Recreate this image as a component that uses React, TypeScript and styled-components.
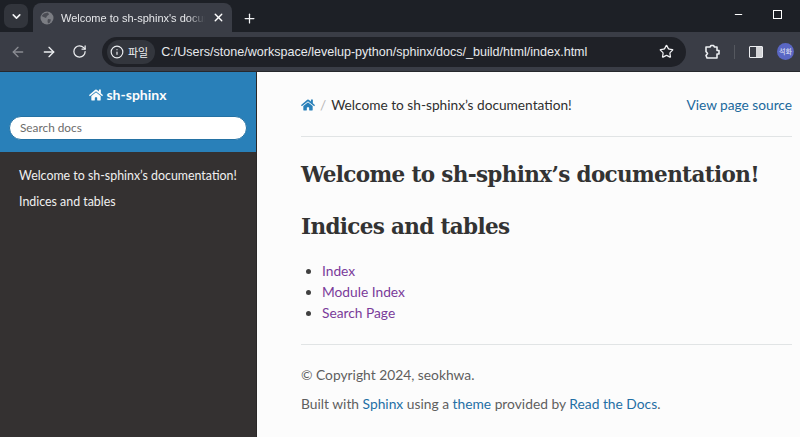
import React from 'react'
import styled, { createGlobalStyle } from 'styled-components'
import { FaHome } from 'react-icons/fa'
import { ArrowLeft, ArrowRight, ChevronDown, Info, Minus, Plus, RotateCw, Star, X } from 'lucide-react'

const GlobalStyle = createGlobalStyle`
  html, body {
    margin: 0;
    padding: 0;
    height: 437px;
    overflow: hidden;
    background: #fcfcfc;
    font-family: Lato, "Liberation Sans", sans-serif;
    font-variant-ligatures: common-ligatures;
  }
`

const Page = styled.div`
  width: 800px;
  height: 437px;
  display: flex;
  flex-direction: column;
  overflow: hidden;
`

const TabStrip = styled.div`
  height: 32px;
  background: #1d2026;
  display: flex;
  align-items: flex-end;
  padding-left: 4px;
  color: #f1f2f4;
`

const TabMenu = styled.div`
  width: 24px;
  height: 24px;
  margin-bottom: 4px;
  border-radius: 7px;
  background: #32353c;
  display: flex;
  align-items: center;
  justify-content: center;
`

const Tab = styled.div`
  width: 199px;
  height: 29px;
  margin-left: 5px;
  padding: 0 7px 0 7px;
  box-sizing: border-box;
  background: #3a3d46;
  border-radius: 8px 8px 0 0;
  display: flex;
  align-items: center;
  gap: 7px;
  font-family: "Liberation Sans", sans-serif;
  font-size: 11px;
  color: #e6e7ea;
`

const TabTitle = styled.span`
  flex: 1;
  overflow: hidden;
  white-space: nowrap;
  mask-image: linear-gradient(to right, #000 88%, transparent);
`

const NewTab = styled.div`
  margin: 0 0 6px 10px;
  display: flex;
  flex: 1;
`

const WindowButtons = styled.div`
  display: flex;
  align-items: center;
  gap: 29px;
  padding: 0 18px 12px 0;
`

const MaxIcon = styled.div`
  width: 7px;
  height: 7px;
  border: 1.5px solid #fff;
`

const Toolbar = styled.div`
  height: 40px;
  background: #3a3d46;
  display: flex;
  align-items: center;
  padding: 0 6px 0 10px;
  box-sizing: border-box;
  border-bottom: 1px solid #26282d;
  color: #eceef1;
`

const NavButton = styled.div<{ $dim?: boolean }>`
  width: 31px;
  display: flex;
  color: ${({ $dim }) => ($dim ? '#8a8c92' : '#eceef1')};
`

const Omnibox = styled.div`
  width: 584px;
  height: 30px;
  margin-left: -1px;
  background: #1f2127;
  border-radius: 15px;
  display: flex;
  align-items: center;
  padding: 0 12px 0 5px;
  box-sizing: border-box;
`

const Chip = styled.div`
  height: 24px;
  padding: 0 7px 0 3px;
  border-radius: 12px;
  background: #33363d;
  display: flex;
  align-items: center;
  gap: 4px;
  font-family: "Noto Sans CJK KR", sans-serif;
  font-size: 11px;
  color: #eceef1;
`

const Url = styled.span`
  flex: 1;
  margin-left: 6px;
  font-family: "Liberation Sans", sans-serif;
  font-size: 12.55px;
  color: #e8eaed;
  white-space: nowrap;
`

const ToolbarRight = styled.div`
  flex: 1;
  display: flex;
  align-items: center;
  justify-content: flex-end;
  gap: 14px;
`

const Divider = styled.div`
  width: 1px;
  height: 14px;
  background: #55585f;
`

const SidePanelIcon = styled.div`
  width: 12px;
  height: 10px;
  border: 1.5px solid #eceef1;
  border-radius: 1px;
  background: linear-gradient(to right, #3a3d46 50%, #d4d5d8 50%);
`

const Avatar = styled.div`
  width: 17px;
  height: 17px;
  border-radius: 50%;
  background: #5a67c4;
  color: #e8eaf6;
  font-family: "Noto Sans CJK KR", sans-serif;
  font-size: 7px;
  line-height: 17px;
  text-align: center;
`

const Body = styled.div`
  flex: 1;
  display: flex;
  min-height: 0;
`

const Sidebar = styled.nav`
  width: 257px;
  flex-shrink: 0;
  background: #343131;
  border-right: 1px solid #2a2828;
  box-sizing: border-box;
`

const SearchArea = styled.div`
  height: 80px;
  background: #2980b9;
  box-sizing: border-box;
  padding-top: 13px;
  display: flex;
  flex-direction: column;
  align-items: center;
`

const Brand = styled.div`
  display: flex;
  align-items: center;
  gap: 3px;
  height: 19px;
  color: #fcfcfc;
  font-weight: 700;
  font-size: 14px;
`

const SearchBox = styled.div`
  width: 238px;
  height: 24px;
  margin-top: 12px;
  padding-left: 10px;
  box-sizing: border-box;
  background: #fff;
  border: 1px solid #2472a4;
  border-radius: 12px;
  font-size: 11.8px;
  line-height: 22px;
  color: #6b6b6b;
`

const SideMenu = styled.div`
  padding: 11px 19px;
`

const SideLink = styled.div`
  height: 26px;
  font-size: 12.4px;
  line-height: 26px;
  color: #f0f0f0;
  white-space: nowrap;
`

const Content = styled.main`
  flex: 1;
  padding: 0 8px 0 44px;
  background: #fcfcfc;
  color: #404040;
`

const Breadcrumbs = styled.div`
  height: 65px;
  padding-top: 1px;
  display: flex;
  align-items: center;
  border-bottom: 1px solid #e1e4e5;
  font-size: 13.7px;
  color: #2f2f2f;
  box-sizing: border-box;
`

const Sep = styled.span`
  margin: 0 5px 0 5px;
  color: #b8b8b8;
`

const SourceLink = styled.a`
  margin-left: auto;
  color: #20699c;
`

const Title = styled.h1<{ $top: number }>`
  margin: ${({ $top }) => $top}px 0 0;
  font-family: "DejaVu Serif", serif;
  font-size: 21.5px;
  line-height: 30px;
  font-weight: 700;
  letter-spacing: -0.65px;
  color: #333;
`

const LinkList = styled.ul`
  margin: 18px 0 0;
  padding: 0 0 0 21px;
  list-style: disc;
  font-size: 13.75px;
  line-height: 21px;
`

const VisitedLink = styled.a`
  color: #7a3b9a;
`

const Footer = styled.footer`
  margin-top: 21px;
  padding-top: 19px;
  border-top: 1px solid #e1e4e5;
  font-size: 13.8px;
  color: #5f5f5f;
`

const FooterLine = styled.div`
  height: 29px;
  line-height: 21px;
`

const FootLink = styled.a`
  color: #1f6fa5;
`

// chrome's grey placeholder favicon
const FaviconGlobe = () => (
  <svg width="14" height="14" viewBox="0 0 14 14">
    <circle cx="7" cy="7" r="6.5" fill="#7b7d83" />
    <path d="M4 2.5 L8 1.5 L9 3.5 L7 5 L6 7 L3.5 6 L1.5 5 Z M8 8 L11 8.5 L10 11.5 L8 12.5 L7.5 10 Z" fill="#4a4c54" />
  </svg>
)

const ExtensionIcon = () => (
  <svg width="16" height="16" viewBox="0 0 16 16" fill="none" stroke="#eceef1" strokeWidth="1.6" strokeLinejoin="round">
    <path d="M2 3 H6 L7 1.5 H9.5 L10.5 3 H13 V6.5 H15 V10 H13 V14 H3 L2 11.5 L3.5 9.5 L2 7.5 Z" />
  </svg>
)

export default function App() {
  return (
    <Page>
      <GlobalStyle />
      <TabStrip>
        <TabMenu>
          <ChevronDown size={13} strokeWidth={3} />
        </TabMenu>
        <Tab>
          <FaviconGlobe />
          <TabTitle>Welcome to sh-sphinx's documentation!</TabTitle>
          <X size={13} strokeWidth={2.5} color="#fff" />
        </Tab>
        <NewTab>
          <Plus size={15} strokeWidth={2} />
        </NewTab>
        <WindowButtons>
          <Minus size={11} strokeWidth={2.5} color="#fff" />
          <MaxIcon />
        </WindowButtons>
      </TabStrip>
      <Toolbar>
        <NavButton $dim>
          <ArrowLeft size={16} strokeWidth={2} />
        </NavButton>
        <NavButton>
          <ArrowRight size={16} strokeWidth={2} />
        </NavButton>
        <NavButton>
          <RotateCw size={15} strokeWidth={2} />
        </NavButton>
        <Omnibox>
          <Chip>
            <Info size={14} strokeWidth={2} />
            파일
          </Chip>
          <Url>C:/Users/stone/workspace/levelup-python/sphinx/docs/_build/html/index.html</Url>
          <Star size={15} strokeWidth={2} color="#f1f2f4" />
        </Omnibox>
        <ToolbarRight>
          <ExtensionIcon />
          <Divider />
          <SidePanelIcon />
          <Avatar>석화</Avatar>
        </ToolbarRight>
      </Toolbar>
      <Body>
        <Sidebar>
          <SearchArea>
            <Brand>
              <FaHome size={14} />
              sh-sphinx
            </Brand>
            <SearchBox>Search docs</SearchBox>
          </SearchArea>
          <SideMenu>
            <SideLink>Welcome to sh-sphinx’s documentation!</SideLink>
            <SideLink>Indices and tables</SideLink>
          </SideMenu>
        </Sidebar>
        <Content>
          <Breadcrumbs>
            <FaHome size={14} color="#2980b9" />
            <Sep>/</Sep>
            Welcome to sh-sphinx’s documentation!
            <SourceLink>View page source</SourceLink>
          </Breadcrumbs>
          <Title $top={23}>Welcome to sh-sphinx’s documentation!</Title>
          <Title $top={22}>Indices and tables</Title>
          <LinkList>
            <li><VisitedLink>Index</VisitedLink></li>
            <li><VisitedLink>Module Index</VisitedLink></li>
            <li><VisitedLink>Search Page</VisitedLink></li>
          </LinkList>
          <Footer>
            <FooterLine>© Copyright 2024, seokhwa.</FooterLine>
            <FooterLine>
              Built with <FootLink>Sphinx</FootLink> using a <FootLink>theme</FootLink> provided by{' '}
              <FootLink>Read the Docs</FootLink>.
            </FooterLine>
          </Footer>
        </Content>
      </Body>
    </Page>
  )
}
